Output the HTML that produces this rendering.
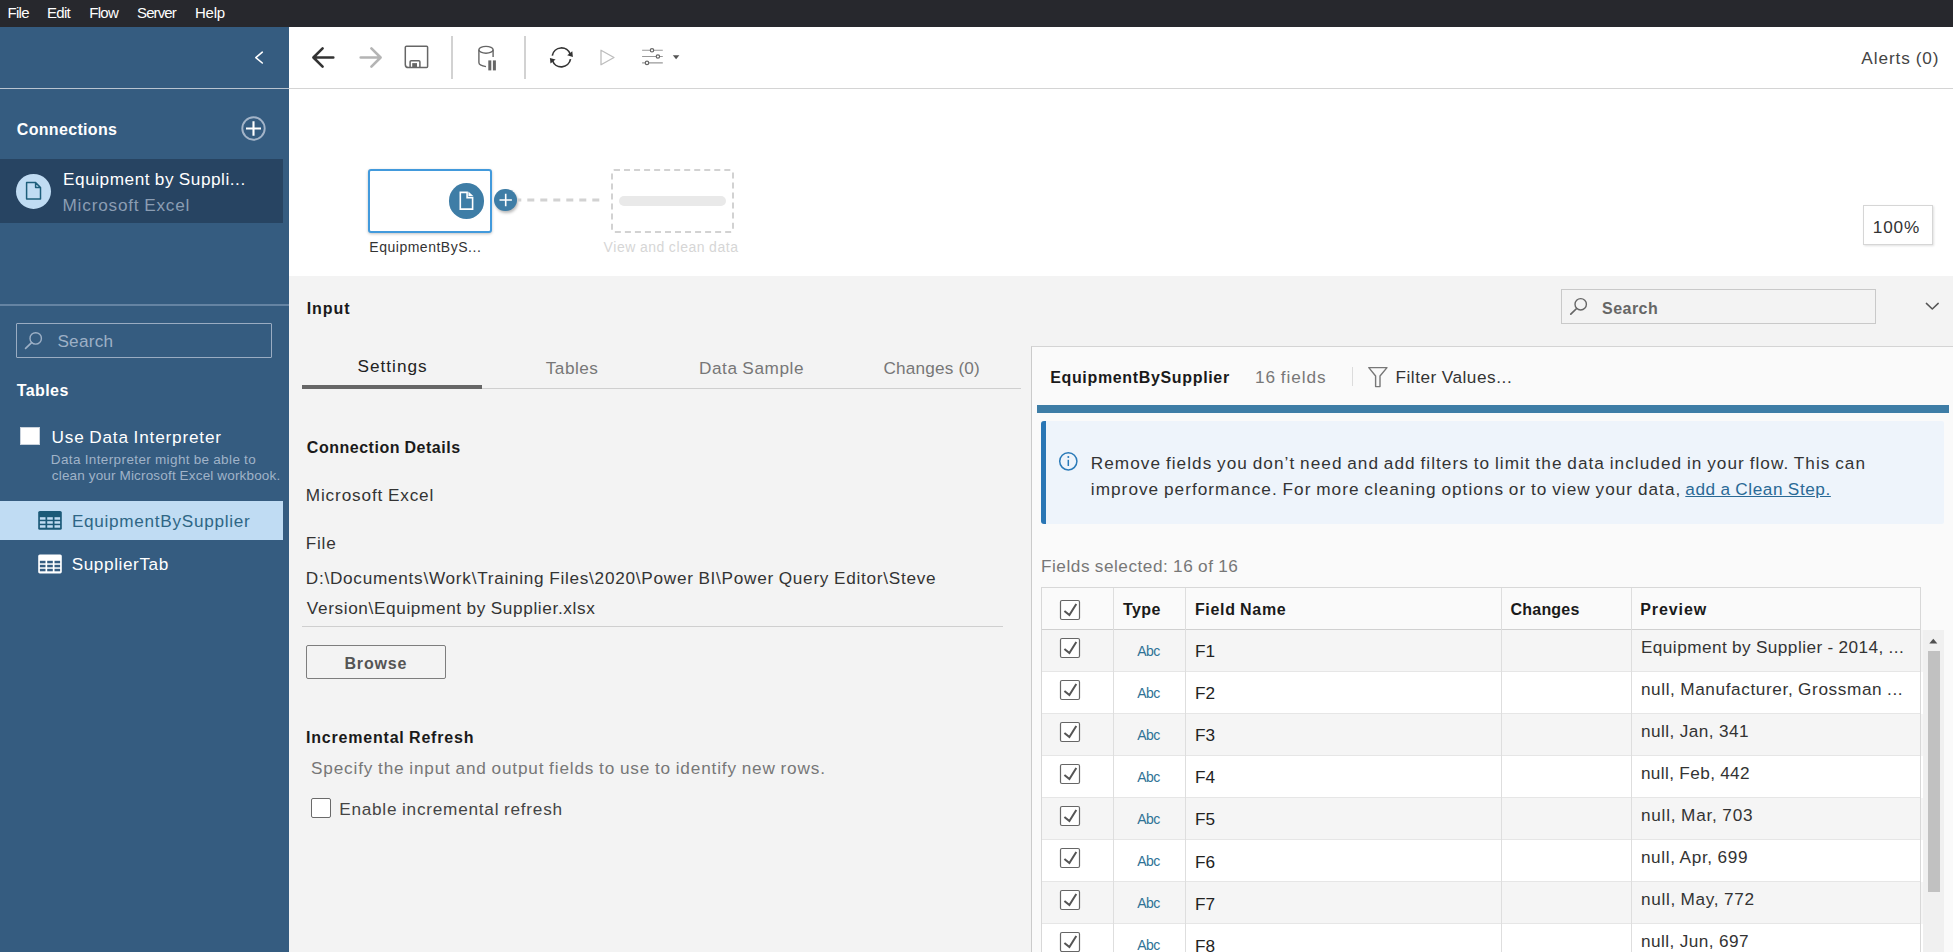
<!DOCTYPE html>
<html>
<head>
<meta charset="utf-8">
<title>Tableau Prep</title>
<style>
html,body{margin:0;padding:0;}
body{width:1953px;height:952px;overflow:hidden;background:#f3f3f3;position:relative;font-family:"Liberation Sans",sans-serif;}
.b{position:absolute;box-sizing:border-box;}
.t{position:absolute;white-space:pre;line-height:1em;font-family:"Liberation Sans",sans-serif;}
svg{position:absolute;left:0;top:0;}
</style>
</head>
<body>
<!-- menu bar -->
<div class="b" style="left:0;top:0;width:1953px;height:27px;background:#27282d;"></div>
<!-- sidebar -->
<div class="b" style="left:0;top:27px;width:289px;height:925px;background:#355c80;"></div>
<div class="b" style="left:0;top:88px;width:289px;height:1px;background:#b9c4d0;"></div>
<div class="b" style="left:0;top:159px;width:283px;height:64px;background:#274462;"></div>
<div class="b" style="left:0;top:304px;width:289px;height:2px;background:#6584a3;"></div>
<div class="b" style="left:16px;top:323px;width:256px;height:35px;border:1px solid #9aacc2;border-radius:1px;"></div>
<div class="b" style="left:19.5px;top:427px;width:20px;height:18px;background:#fff;border:1px solid #c9d2dc;"></div>
<div class="b" style="left:0;top:501px;width:283px;height:39px;background:#c0dcf3;"></div>
<!-- toolbar + flow pane -->
<div class="b" style="left:289px;top:27px;width:1664px;height:249px;background:#fff;"></div>
<div class="b" style="left:289px;top:88px;width:1664px;height:1px;background:#d4d4d4;"></div>
<div class="b" style="left:451px;top:36px;width:2px;height:43px;background:#d2d2d2;"></div>
<div class="b" style="left:524px;top:36px;width:2px;height:43px;background:#d2d2d2;"></div>
<!-- flow nodes -->
<div class="b" style="left:368.4px;top:169.3px;width:123.8px;height:63.6px;border:2px solid #429adc;border-radius:3px;background:#fff;box-shadow:0 1px 3px rgba(0,0,0,.25);"></div>
<div class="b" style="left:448.5px;top:183.4px;width:35.6px;height:35.6px;border-radius:50%;background:#3e7da6;"></div>
<div class="b" style="left:494.3px;top:188.5px;width:22.8px;height:22.8px;border-radius:50%;background:#3e7da6;box-shadow:1px 2px 3px rgba(0,0,0,.28);"></div>
<div class="b" style="left:618.5px;top:196.3px;width:107.8px;height:10px;border-radius:5px;background:#e9e9e9;"></div>
<div class="b" style="left:610.5px;top:169.4px;width:123.4px;height:63.5px;border:2px dashed #d2d2d2;border-radius:3px;"></div>
<!-- zoom box -->
<div class="b" style="left:1863px;top:205px;width:70px;height:40px;background:#fff;border:1px solid #d6d6d6;box-shadow:1px 1px 2px rgba(0,0,0,.12);"></div>
<!-- input pane: tabs -->
<div class="b" style="left:302px;top:388px;width:719px;height:1px;background:#cfcfcf;"></div>
<div class="b" style="left:302px;top:385px;width:180px;height:4px;background:#666;"></div>
<div class="b" style="left:302px;top:626px;width:701px;height:1px;background:#cfcfcf;"></div>
<div class="b" style="left:306px;top:645px;width:140px;height:34px;border:1px solid #7d7d7d;border-radius:2px;"></div>
<div class="b" style="left:310.7px;top:798px;width:20.3px;height:20px;border:1px solid #6a6a6a;border-radius:2px;background:#fff;"></div>
<!-- search (right) -->
<div class="b" style="left:1561px;top:289px;width:315px;height:35px;border:1px solid #c9c9c9;"></div>
<!-- right panel -->
<div class="b" style="left:1031px;top:346px;width:922px;height:606px;background:#fafafa;border-left:1px solid #cbcbcb;border-top:1px solid #d4d4d4;"></div>
<div class="b" style="left:1352px;top:367px;width:1px;height:19px;background:#dcdcdc;"></div>
<div class="b" style="left:1037px;top:405px;width:912px;height:8px;background:#3e7da6;"></div>
<div class="b" style="left:1041px;top:421px;width:903px;height:103px;background:#eef4fb;border-left:5px solid #2976b5;border-radius:3px 2px 2px 3px;"></div>
<!-- table -->
<div class="b" style="left:1041px;top:587px;width:880px;height:365px;border:1px solid #d8d8d8;border-bottom:none;"></div>
<div class="b" style="left:1042px;top:630px;width:881px;height:42px;background:#f5f5f5;"></div>
<div class="b" style="left:1042px;top:672px;width:881px;height:42px;background:#fff;"></div>
<div class="b" style="left:1042px;top:714px;width:881px;height:42px;background:#f5f5f5;"></div>
<div class="b" style="left:1042px;top:756px;width:881px;height:42px;background:#fff;"></div>
<div class="b" style="left:1042px;top:798px;width:881px;height:42px;background:#f5f5f5;"></div>
<div class="b" style="left:1042px;top:840px;width:881px;height:42px;background:#fff;"></div>
<div class="b" style="left:1042px;top:882px;width:881px;height:42px;background:#f5f5f5;"></div>
<div class="b" style="left:1042px;top:924px;width:881px;height:28px;background:#fff;"></div>
<div class="b" style="left:1042px;top:629px;width:879px;height:1px;background:#d0d0d0;"></div>
<div class="b" style="left:1042px;top:671px;width:879px;height:1px;background:#e6e6e6;"></div>
<div class="b" style="left:1042px;top:713px;width:879px;height:1px;background:#e6e6e6;"></div>
<div class="b" style="left:1042px;top:755px;width:879px;height:1px;background:#e6e6e6;"></div>
<div class="b" style="left:1042px;top:797px;width:879px;height:1px;background:#e6e6e6;"></div>
<div class="b" style="left:1042px;top:839px;width:879px;height:1px;background:#e6e6e6;"></div>
<div class="b" style="left:1042px;top:881px;width:879px;height:1px;background:#e6e6e6;"></div>
<div class="b" style="left:1042px;top:923px;width:879px;height:1px;background:#e6e6e6;"></div>
<div class="b" style="left:1113px;top:588px;width:1px;height:364px;background:#dedede;"></div>
<div class="b" style="left:1185px;top:588px;width:1px;height:364px;background:#dedede;"></div>
<div class="b" style="left:1501px;top:588px;width:1px;height:364px;background:#dedede;"></div>
<div class="b" style="left:1631px;top:588px;width:1px;height:364px;background:#dedede;"></div>
<div class="b" style="left:1920px;top:588px;width:1px;height:364px;background:#d8d8d8;"></div>
<!-- scrollbar -->
<div class="b" style="left:1923px;top:630px;width:21px;height:322px;background:#f0f0f0;"></div>
<div class="b" style="left:1928px;top:651px;width:12px;height:241px;background:#c1c1c1;"></div>
<svg width="1953" height="952" viewBox="0 0 1953 952">
<path d="M262.3,52.2 L255.8,57.6 L262.3,63" fill="none" stroke="#fff" stroke-width="1.6" stroke-linecap="round" stroke-linejoin="round"/>
<circle cx="253.5" cy="128.5" r="11.2" fill="none" stroke="#a3b4c8" stroke-width="1.9"/>
<path d="M246,128.5 H261 M253.5,121.2 V135.8" stroke="#fff" stroke-width="2.1" fill="none"/>
<circle cx="33.5" cy="191.4" r="17.5" fill="#c0dcf3"/>
<path d="M26.6,182.6 H35.6 L40.5,187.5 V199 H26.6 Z M35.6,182.6 V187.5 H40.5" fill="none" stroke="#1d5e7b" stroke-width="1.5" stroke-linejoin="round"/>
<circle cx="35.7" cy="338.4" r="5.7" fill="none" stroke="#9db0c6" stroke-width="1.4"/>
<path d="M31.6,342.6 L25.6,348.3" stroke="#9db0c6" stroke-width="1.7" stroke-linecap="round"/>
<rect x="38.2" y="510.9" width="23.6" height="18.9" rx="1.6" fill="#1c5a78"/><rect x="39.9" y="517.2" width="5.6" height="2.5" fill="#c0dcf3"/><rect x="47.2" y="517.2" width="5.6" height="2.5" fill="#c0dcf3"/><rect x="54.5" y="517.2" width="5.6" height="2.5" fill="#c0dcf3"/><rect x="39.9" y="521.2" width="5.6" height="2.5" fill="#c0dcf3"/><rect x="47.2" y="521.2" width="5.6" height="2.5" fill="#c0dcf3"/><rect x="54.5" y="521.2" width="5.6" height="2.5" fill="#c0dcf3"/><rect x="39.9" y="525.2" width="5.6" height="2.5" fill="#c0dcf3"/><rect x="47.2" y="525.2" width="5.6" height="2.5" fill="#c0dcf3"/><rect x="54.5" y="525.2" width="5.6" height="2.5" fill="#c0dcf3"/>
<rect x="38.2" y="554.5" width="23.6" height="18.9" rx="1.6" fill="#ffffff"/><rect x="39.9" y="560.8" width="5.6" height="2.5" fill="#355c80"/><rect x="47.2" y="560.8" width="5.6" height="2.5" fill="#355c80"/><rect x="54.5" y="560.8" width="5.6" height="2.5" fill="#355c80"/><rect x="39.9" y="564.8" width="5.6" height="2.5" fill="#355c80"/><rect x="47.2" y="564.8" width="5.6" height="2.5" fill="#355c80"/><rect x="54.5" y="564.8" width="5.6" height="2.5" fill="#355c80"/><rect x="39.9" y="568.8" width="5.6" height="2.5" fill="#355c80"/><rect x="47.2" y="568.8" width="5.6" height="2.5" fill="#355c80"/><rect x="54.5" y="568.8" width="5.6" height="2.5" fill="#355c80"/>
<path d="M333.3,57.5 H313.6 M322.6,48.4 L313.4,57.5 L322.6,66.6" fill="none" stroke="#333" stroke-width="2.6" stroke-linecap="round" stroke-linejoin="round"/>
<path d="M360.7,57.5 H380.4 M371.4,48.4 L380.6,57.5 L371.4,66.6" fill="none" stroke="#b4b4b4" stroke-width="2.6" stroke-linecap="round" stroke-linejoin="round"/>
<path d="M406.5,46.3 H426.6 Q427.6,46.3 427.6,47.3 V66.6 Q427.6,67.6 426.6,67.6 H408.5 Q405.3,67.6 405.3,64.4 V47.3 Q405.3,46.3 406.5,46.3 Z" fill="none" stroke="#666" stroke-width="1.5"/>
<path d="M410.1,67.6 V61.8 Q410.1,60.7 411.2,60.7 H418.8 Q419.9,60.7 419.9,61.8 V67.6" fill="none" stroke="#666" stroke-width="1.5"/>
<rect x="412.2" y="63.1" width="4.8" height="4.5" fill="#666"/>
<ellipse cx="486" cy="49.8" rx="7.1" ry="3.4" fill="none" stroke="#666" stroke-width="1.4"/>
<path d="M478.9,49.8 V62.6 Q478.9,65.8 486,66.6 M493.1,49.8 V57" fill="none" stroke="#666" stroke-width="1.4"/>
<rect x="488.3" y="60.4" width="3" height="10" fill="#666"/><rect x="492.9" y="60.4" width="3" height="10" fill="#666"/>
<path d="M552.3,55.6 A9.3,9.3 0 0 1 570.3,54.4" fill="none" stroke="#333" stroke-width="1.7"/>
<path d="M572.9,56.9 L567.2,55.3 L572.3,51.3 Z" fill="#333"/>
<path d="M570.5,59.2 A9.3,9.3 0 0 1 552.5,60.4" fill="none" stroke="#333" stroke-width="1.7"/>
<path d="M549.9,57.9 L555.6,59.5 L550.5,63.5 Z" fill="#333"/>
<path d="M601,50.2 L614,57.5 L601,64.8 Z" fill="none" stroke="#bdbdbd" stroke-width="1.3" stroke-linejoin="round"/>
<path d="M642.1,50.3 H662.8 M642.1,56.5 H662.8 M642.1,62.9 H662.8" stroke="#999" stroke-width="1.1"/>
<circle cx="652" cy="50.3" r="1.7" fill="#fff" stroke="#666" stroke-width="1.2"/><circle cx="657.9" cy="56.5" r="1.7" fill="#fff" stroke="#666" stroke-width="1.2"/><circle cx="647" cy="62.9" r="1.7" fill="#fff" stroke="#666" stroke-width="1.2"/>
<path d="M672.8,55.3 H679.4 L676.1,59.2 Z" fill="#555"/>
<path d="M460.3,192.4 H467.1 V197.6 H472.6 V209.1 H460.3 Z" fill="none" stroke="#fff" stroke-width="1.6" stroke-linejoin="miter"/>
<path d="M468.4,191.6 L473.3,196 H468.4 Z" fill="#fff"/>
<path d="M499.5,200 H511.9 M505.7,193.8 V206.2" stroke="#fff" stroke-width="1.6" fill="none"/>
<path d="M517.5,200 H599.8" stroke="#d2d2d2" stroke-width="3" stroke-dasharray="7 6" stroke-dashoffset="3.2" fill="none"/>
<circle cx="1580.7" cy="304.3" r="5.7" fill="none" stroke="#666" stroke-width="1.4"/>
<path d="M1576.6,308.5 L1570.8,314.2" stroke="#666" stroke-width="1.7" stroke-linecap="round"/>
<path d="M1926.4,303.4 L1932.3,309 L1938.2,303.4" fill="none" stroke="#555" stroke-width="1.5" stroke-linecap="round" stroke-linejoin="round"/>
<path d="M1368.8,367.6 H1387 L1380,376 V386.6 H1375.6 V376 Z" fill="none" stroke="#777" stroke-width="1.4" stroke-linejoin="round"/>
<circle cx="1068.3" cy="461.3" r="8.6" fill="none" stroke="#2a7ab8" stroke-width="1.5"/>
<path d="M1068.3,459.8 V466" stroke="#2a7ab8" stroke-width="1.5"/><circle cx="1068.3" cy="457" r="1" fill="#2a7ab8"/>
<rect x="1060.5" y="600.5" width="19" height="19" rx="1.5" fill="#fff" stroke="#666" stroke-width="1.2"/><path d="M1064.4,610.9 L1069.4,615.1 L1076.3,603.9" fill="none" stroke="#555" stroke-width="2"/>
<rect x="1060.5" y="638.5" width="19" height="19" rx="1.5" fill="#fff" stroke="#666" stroke-width="1.2"/><path d="M1064.4,648.9 L1069.4,653.1 L1076.3,641.9" fill="none" stroke="#555" stroke-width="2"/>
<rect x="1060.5" y="680.5" width="19" height="19" rx="1.5" fill="#fff" stroke="#666" stroke-width="1.2"/><path d="M1064.4,690.9 L1069.4,695.1 L1076.3,683.9" fill="none" stroke="#555" stroke-width="2"/>
<rect x="1060.5" y="722.5" width="19" height="19" rx="1.5" fill="#fff" stroke="#666" stroke-width="1.2"/><path d="M1064.4,732.9 L1069.4,737.1 L1076.3,725.9" fill="none" stroke="#555" stroke-width="2"/>
<rect x="1060.5" y="764.5" width="19" height="19" rx="1.5" fill="#fff" stroke="#666" stroke-width="1.2"/><path d="M1064.4,774.9 L1069.4,779.1 L1076.3,767.9" fill="none" stroke="#555" stroke-width="2"/>
<rect x="1060.5" y="806.5" width="19" height="19" rx="1.5" fill="#fff" stroke="#666" stroke-width="1.2"/><path d="M1064.4,816.9 L1069.4,821.1 L1076.3,809.9" fill="none" stroke="#555" stroke-width="2"/>
<rect x="1060.5" y="848.5" width="19" height="19" rx="1.5" fill="#fff" stroke="#666" stroke-width="1.2"/><path d="M1064.4,858.9 L1069.4,863.1 L1076.3,851.9" fill="none" stroke="#555" stroke-width="2"/>
<rect x="1060.5" y="890.5" width="19" height="19" rx="1.5" fill="#fff" stroke="#666" stroke-width="1.2"/><path d="M1064.4,900.9 L1069.4,905.1 L1076.3,893.9" fill="none" stroke="#555" stroke-width="2"/>
<rect x="1060.5" y="932.5" width="19" height="19" rx="1.5" fill="#fff" stroke="#666" stroke-width="1.2"/><path d="M1064.4,942.9 L1069.4,947.1 L1076.3,935.9" fill="none" stroke="#555" stroke-width="2"/>
<path d="M1929.3,643.6 H1937.3 L1933.3,638.8 Z" fill="#505050"/>
</svg>
<span class="t" style="left:7.60px;top:5.00px;font-size:15px;font-weight:400;color:#ffffff;letter-spacing:-0.743px;word-spacing:0.743px;">File</span>
<span class="t" style="left:46.90px;top:5.00px;font-size:15px;font-weight:400;color:#ffffff;letter-spacing:-0.660px;word-spacing:0.660px;">Edit</span>
<span class="t" style="left:89.30px;top:5.00px;font-size:15px;font-weight:400;color:#ffffff;letter-spacing:-0.712px;word-spacing:0.712px;">Flow</span>
<span class="t" style="left:137.00px;top:5.00px;font-size:15px;font-weight:400;color:#ffffff;letter-spacing:-0.877px;word-spacing:0.877px;">Server</span>
<span class="t" style="left:195.00px;top:5.00px;font-size:15px;font-weight:400;color:#ffffff;letter-spacing:-0.269px;word-spacing:0.269px;">Help</span>
<span class="t" style="left:16.80px;top:122.00px;font-size:16px;font-weight:700;color:#ffffff;letter-spacing:0.321px;word-spacing:-0.321px;">Connections</span>
<span class="t" style="left:63.10px;top:171.00px;font-size:17.2px;font-weight:400;color:#ffffff;letter-spacing:0.532px;word-spacing:-0.532px;">Equipment by Suppli...</span>
<span class="t" style="left:62.50px;top:197.00px;font-size:17.2px;font-weight:400;color:#8b9db3;letter-spacing:0.800px;word-spacing:-0.800px;">Microsoft Excel</span>
<span class="t" style="left:57.40px;top:333.00px;font-size:17.2px;font-weight:400;color:#9db0c6;letter-spacing:0.240px;word-spacing:-0.240px;">Search</span>
<span class="t" style="left:16.80px;top:383.00px;font-size:16px;font-weight:700;color:#ffffff;letter-spacing:0.400px;word-spacing:-0.400px;">Tables</span>
<span class="t" style="left:51.50px;top:429.00px;font-size:17.2px;font-weight:400;color:#ffffff;letter-spacing:0.812px;word-spacing:-0.812px;">Use Data Interpreter</span>
<span class="t" style="left:50.80px;top:453.00px;font-size:13.5px;font-weight:400;color:#a0b3c8;letter-spacing:0.391px;word-spacing:-0.391px;">Data Interpreter might be able to</span>
<span class="t" style="left:51.80px;top:469.00px;font-size:13.5px;font-weight:400;color:#a0b3c8;letter-spacing:0.181px;word-spacing:-0.181px;">clean your Microsoft Excel workbook.</span>
<span class="t" style="left:71.90px;top:513.00px;font-size:17.2px;font-weight:400;color:#2e6685;letter-spacing:0.696px;word-spacing:-0.696px;">EquipmentBySupplier</span>
<span class="t" style="left:71.70px;top:556.00px;font-size:17.2px;font-weight:400;color:#ffffff;letter-spacing:0.579px;word-spacing:-0.579px;">SupplierTab</span>
<span class="t" style="left:1861.30px;top:50.00px;font-size:17.2px;font-weight:400;color:#444;letter-spacing:0.939px;word-spacing:-0.939px;">Alerts (0)</span>
<span class="t" style="left:369.30px;top:240.00px;font-size:14px;font-weight:400;color:#333;letter-spacing:0.515px;word-spacing:-0.515px;">EquipmentByS...</span>
<span class="t" style="left:603.60px;top:240.00px;font-size:14px;font-weight:400;color:#d6d6d6;letter-spacing:0.577px;word-spacing:-0.577px;">View and clean data</span>
<span class="t" style="left:1872.80px;top:219.00px;font-size:17.2px;font-weight:400;color:#333;letter-spacing:0.841px;word-spacing:-0.841px;">100%</span>
<span class="t" style="left:306.70px;top:301.00px;font-size:16px;font-weight:700;color:#1a1a1a;letter-spacing:0.959px;word-spacing:-0.959px;">Input</span>
<span class="t" style="left:357.60px;top:358.00px;font-size:17.2px;font-weight:400;color:#222;letter-spacing:0.984px;word-spacing:-0.984px;">Settings</span>
<span class="t" style="left:545.80px;top:360.00px;font-size:17.2px;font-weight:400;color:#777;letter-spacing:0.483px;word-spacing:-0.483px;">Tables</span>
<span class="t" style="left:698.90px;top:360.00px;font-size:17.2px;font-weight:400;color:#777;letter-spacing:0.589px;word-spacing:-0.589px;">Data Sample</span>
<span class="t" style="left:883.40px;top:360.00px;font-size:17.2px;font-weight:400;color:#777;letter-spacing:0.205px;word-spacing:-0.205px;">Changes (0)</span>
<span class="t" style="left:306.80px;top:440.00px;font-size:16px;font-weight:700;color:#1a1a1a;letter-spacing:0.525px;word-spacing:-0.525px;">Connection Details</span>
<span class="t" style="left:305.80px;top:487.00px;font-size:17.2px;font-weight:400;color:#333;letter-spacing:0.846px;word-spacing:-0.846px;">Microsoft Excel</span>
<span class="t" style="left:305.80px;top:535.00px;font-size:17.2px;font-weight:400;color:#333;letter-spacing:0.755px;word-spacing:-0.755px;">File</span>
<span class="t" style="left:305.80px;top:570.00px;font-size:17.2px;font-weight:400;color:#333;letter-spacing:0.728px;word-spacing:-0.728px;">D:\Documents\Work\Training Files\2020\Power BI\Power Query Editor\Steve</span>
<span class="t" style="left:306.80px;top:600.00px;font-size:17.2px;font-weight:400;color:#333;letter-spacing:0.630px;word-spacing:-0.630px;">Version\Equipment by Supplier.xlsx</span>
<span class="t" style="left:344.50px;top:656.00px;font-size:16px;font-weight:700;color:#555;letter-spacing:0.820px;word-spacing:-0.820px;">Browse</span>
<span class="t" style="left:305.90px;top:730.00px;font-size:16px;font-weight:700;color:#1a1a1a;letter-spacing:0.808px;word-spacing:-0.808px;">Incremental Refresh</span>
<span class="t" style="left:311.00px;top:760.00px;font-size:17.2px;font-weight:400;color:#777;letter-spacing:0.844px;word-spacing:-0.844px;">Specify the input and output fields to use to identify new rows.</span>
<span class="t" style="left:339.20px;top:801.00px;font-size:17.2px;font-weight:400;color:#444;letter-spacing:0.759px;word-spacing:-0.759px;">Enable incremental refresh</span>
<span class="t" style="left:1602.00px;top:301.00px;font-size:16px;font-weight:700;color:#666;letter-spacing:0.481px;word-spacing:-0.481px;">Search</span>
<span class="t" style="left:1050.20px;top:370.00px;font-size:16px;font-weight:700;color:#1a1a1a;letter-spacing:0.656px;word-spacing:-0.656px;">EquipmentBySupplier</span>
<span class="t" style="left:1255.00px;top:369.00px;font-size:17.2px;font-weight:400;color:#777;letter-spacing:0.940px;word-spacing:-0.940px;">16 fields</span>
<span class="t" style="left:1395.40px;top:369.00px;font-size:17.2px;font-weight:400;color:#333;letter-spacing:0.550px;word-spacing:-0.550px;">Filter Values...</span>
<span class="t" style="left:1090.80px;top:455.00px;font-size:17.2px;font-weight:400;color:#333;letter-spacing:1.052px;word-spacing:-1.052px;">Remove fields you don’t need and add filters to limit the data included in your flow. This can</span>
<span class="t" style="left:1090.80px;top:481.00px;font-size:17.2px;font-weight:400;color:#333;letter-spacing:1.040px;word-spacing:-1.040px;">improve performance. For more cleaning options or to view your data,</span>
<span class="t" style="left:1685.30px;top:481.00px;font-size:17.2px;font-weight:400;color:#2a6a96;letter-spacing:0.567px;word-spacing:-0.567px;text-decoration:underline;">add a Clean Step.</span>
<span class="t" style="left:1041.00px;top:558.00px;font-size:17.2px;font-weight:400;color:#777;letter-spacing:0.527px;word-spacing:-0.527px;">Fields selected: 16 of 16</span>
<span class="t" style="left:1122.90px;top:602.00px;font-size:16px;font-weight:700;color:#1a1a1a;letter-spacing:0.447px;word-spacing:-0.447px;">Type</span>
<span class="t" style="left:1194.90px;top:602.00px;font-size:16px;font-weight:700;color:#1a1a1a;letter-spacing:0.680px;word-spacing:-0.680px;">Field Name</span>
<span class="t" style="left:1510.60px;top:602.00px;font-size:16px;font-weight:700;color:#1a1a1a;letter-spacing:0.188px;word-spacing:-0.188px;">Changes</span>
<span class="t" style="left:1640.20px;top:602.00px;font-size:16px;font-weight:700;color:#1a1a1a;letter-spacing:0.910px;word-spacing:-0.910px;">Preview</span>
<span class="t" style="left:1137.20px;top:644.00px;font-size:14px;font-weight:400;color:#2f7396;letter-spacing:-0.512px;word-spacing:0.512px;">Abc</span>
<span class="t" style="left:1194.90px;top:643.00px;font-size:17.2px;font-weight:400;color:#222;letter-spacing:0.000px;word-spacing:-0.000px;">F1</span>
<span class="t" style="left:1640.90px;top:639.00px;font-size:17.2px;font-weight:400;color:#333;letter-spacing:0.465px;word-spacing:-0.465px;">Equipment by Supplier - 2014, ...</span>
<span class="t" style="left:1137.20px;top:686.00px;font-size:14px;font-weight:400;color:#2f7396;letter-spacing:-0.512px;word-spacing:0.512px;">Abc</span>
<span class="t" style="left:1194.90px;top:685.00px;font-size:17.2px;font-weight:400;color:#222;letter-spacing:0.000px;word-spacing:-0.000px;">F2</span>
<span class="t" style="left:1640.90px;top:681.00px;font-size:17.2px;font-weight:400;color:#333;letter-spacing:0.612px;word-spacing:-0.612px;">null, Manufacturer, Grossman ...</span>
<span class="t" style="left:1137.20px;top:728.00px;font-size:14px;font-weight:400;color:#2f7396;letter-spacing:-0.512px;word-spacing:0.512px;">Abc</span>
<span class="t" style="left:1194.90px;top:727.00px;font-size:17.2px;font-weight:400;color:#222;letter-spacing:0.000px;word-spacing:-0.000px;">F3</span>
<span class="t" style="left:1640.90px;top:723.00px;font-size:17.2px;font-weight:400;color:#333;letter-spacing:0.492px;word-spacing:-0.492px;">null, Jan, 341</span>
<span class="t" style="left:1137.20px;top:770.00px;font-size:14px;font-weight:400;color:#2f7396;letter-spacing:-0.512px;word-spacing:0.512px;">Abc</span>
<span class="t" style="left:1194.90px;top:769.00px;font-size:17.2px;font-weight:400;color:#222;letter-spacing:0.000px;word-spacing:-0.000px;">F4</span>
<span class="t" style="left:1640.90px;top:765.00px;font-size:17.2px;font-weight:400;color:#333;letter-spacing:0.419px;word-spacing:-0.419px;">null, Feb, 442</span>
<span class="t" style="left:1137.20px;top:812.00px;font-size:14px;font-weight:400;color:#2f7396;letter-spacing:-0.512px;word-spacing:0.512px;">Abc</span>
<span class="t" style="left:1194.90px;top:811.00px;font-size:17.2px;font-weight:400;color:#222;letter-spacing:0.000px;word-spacing:-0.000px;">F5</span>
<span class="t" style="left:1640.90px;top:807.00px;font-size:17.2px;font-weight:400;color:#333;letter-spacing:0.771px;word-spacing:-0.771px;">null, Mar, 703</span>
<span class="t" style="left:1137.20px;top:854.00px;font-size:14px;font-weight:400;color:#2f7396;letter-spacing:-0.512px;word-spacing:0.512px;">Abc</span>
<span class="t" style="left:1194.90px;top:854.00px;font-size:17.2px;font-weight:400;color:#222;letter-spacing:0.000px;word-spacing:-0.000px;">F6</span>
<span class="t" style="left:1640.90px;top:849.00px;font-size:17.2px;font-weight:400;color:#333;letter-spacing:0.666px;word-spacing:-0.666px;">null, Apr, 699</span>
<span class="t" style="left:1137.20px;top:896.00px;font-size:14px;font-weight:400;color:#2f7396;letter-spacing:-0.512px;word-spacing:0.512px;">Abc</span>
<span class="t" style="left:1194.90px;top:896.00px;font-size:17.2px;font-weight:400;color:#222;letter-spacing:0.000px;word-spacing:-0.000px;">F7</span>
<span class="t" style="left:1640.90px;top:891.00px;font-size:17.2px;font-weight:400;color:#333;letter-spacing:0.685px;word-spacing:-0.685px;">null, May, 772</span>
<span class="t" style="left:1137.20px;top:938.00px;font-size:14px;font-weight:400;color:#2f7396;letter-spacing:-0.512px;word-spacing:0.512px;">Abc</span>
<span class="t" style="left:1194.90px;top:938.00px;font-size:17.2px;font-weight:400;color:#222;letter-spacing:0.000px;word-spacing:-0.000px;">F8</span>
<span class="t" style="left:1640.90px;top:933.00px;font-size:17.2px;font-weight:400;color:#333;letter-spacing:0.492px;word-spacing:-0.492px;">null, Jun, 697</span>
</body>
</html>
